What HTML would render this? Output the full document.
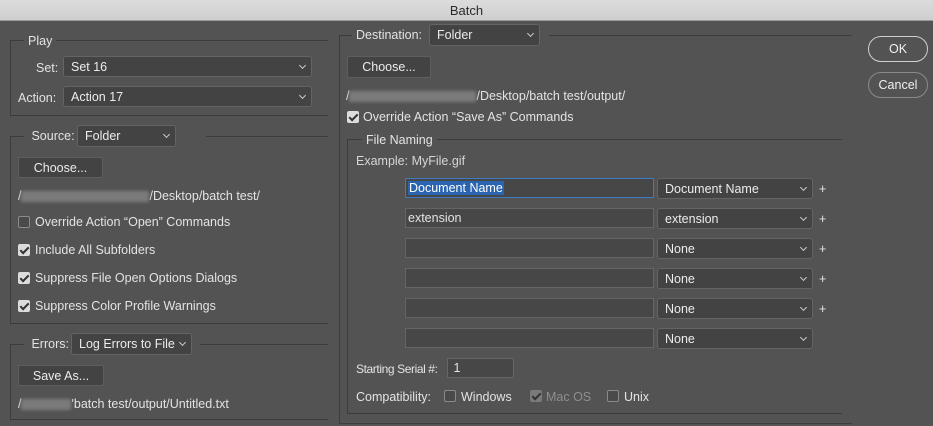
<!DOCTYPE html>
<html><head><style>
*{margin:0;padding:0;box-sizing:border-box}
body{width:933px;height:426px;background:#535353;font-family:"Liberation Sans",sans-serif;font-size:12.5px;color:#e3e3e3;position:relative;overflow:hidden}
.a{position:absolute;white-space:nowrap;margin-top:1px}
.title{left:0;top:0;width:933px;height:21px;background:linear-gradient(#dcdcdc,#cfcfcf);border-bottom:1px solid #9a9a9a;color:#2a2a2a;text-align:center;line-height:21px;font-size:13px;margin-top:0}
.hl{position:absolute;height:1px;background:#3c3c3c}
.vl{position:absolute;width:1px;background:#3c3c3c}
.dd{position:absolute;background:#434343;border:1px solid #646464;border-radius:3px;padding-left:7px;line-height:20px;color:#ececec}
.dd:after{content:"";position:absolute;right:6px;top:6px;width:4px;height:4px;border-right:1px solid #ccc;border-bottom:1px solid #ccc;transform:rotate(45deg)}
.btn{position:absolute;background:#434343;border:1px solid #5e5e5e;border-radius:2px;text-align:center;line-height:20px;color:#ececec}
.in{position:absolute;background:#474747;border:1px solid #656565;height:20px;padding-left:2px;line-height:19px}
.cb{position:absolute;width:12px;height:12px;border:1px solid #8a8a8a;border-radius:2px;background:#4a4a4a}
.cb.on{background:#dcdcdc;border-color:#dcdcdc}
.cb.on:after{content:"";position:absolute;left:3px;top:0px;width:3px;height:7px;border-right:2px solid #333;border-bottom:2px solid #333;transform:rotate(45deg)}
.blur{display:inline-block;height:11px;background:#7b7b7b;filter:blur(1.5px);vertical-align:middle}
.ok{position:absolute;border:1px solid #cfcfcf;border-radius:13px;text-align:center;color:#f0f0f0}
.lbl{background:#535353;padding:0 4px}
</style></head><body>
<div class="a title">Batch</div>

<div class="hl" style="left:10px;top:40px;width:318px"></div>
<div class="vl" style="left:10px;top:40px;height:76px"></div>
<div class="hl" style="left:10px;top:115px;width:318px"></div>
<div class="a lbl" style="left:24px;top:33px">Play</div>
<div class="a" style="left:36px;top:60px">Set:</div>
<div class="dd" style="left:63px;top:56px;width:249px;height:21px">Set 16</div>
<div class="a" style="left:18px;top:90px">Action:</div>
<div class="dd" style="left:63px;top:86px;width:249px;height:21px">Action 17</div>

<div class="hl" style="left:10px;top:136px;width:318px"></div>
<div class="vl" style="left:10px;top:136px;height:188px"></div>
<div class="hl" style="left:10px;top:323px;width:318px"></div>
<div class="a lbl" style="left:24px;top:128px;width:182px;height:16px">&nbsp;Source:</div>
<div class="dd" style="left:77px;top:125px;width:99px;height:22px;line-height:21px">Folder</div>
<div class="btn" style="left:18px;top:157px;width:85px;height:21px">Choose...</div>
<div class="a" style="left:18px;top:188px">/<span class="blur" style="width:128px"></span>/Desktop/batch test/</div>
<div class="cb" style="left:18px;top:216px"></div><div class="a" style="left:35px;top:214px">Override Action “Open” Commands</div>
<div class="cb on" style="left:18px;top:244px"></div><div class="a" style="left:35px;top:242px">Include All Subfolders</div>
<div class="cb on" style="left:18px;top:272px"></div><div class="a" style="left:35px;top:270px">Suppress File Open Options Dialogs</div>
<div class="cb on" style="left:18px;top:300px"></div><div class="a" style="left:35px;top:298px">Suppress Color Profile Warnings</div>

<div class="hl" style="left:10px;top:344px;width:318px"></div>
<div class="vl" style="left:10px;top:344px;height:76px"></div>
<div class="hl" style="left:10px;top:419px;width:318px"></div>
<div class="a lbl" style="left:24px;top:336px;width:176px;height:16px">&nbsp;Errors:</div>
<div class="dd" style="left:71px;top:333px;width:121px;height:22px;line-height:21px">Log Errors to File</div>
<div class="btn" style="left:18px;top:365px;width:86px;height:21px">Save As...</div>
<div class="a" style="left:18px;top:396px">/<span class="blur" style="width:50px"></span>'batch test/output/Untitled.txt</div>

<div class="hl" style="left:339px;top:35px;width:513px"></div>
<div class="vl" style="left:339px;top:35px;height:389px"></div>
<div class="hl" style="left:339px;top:423px;width:513px"></div>
<div class="a lbl" style="left:352px;top:27px;width:197px;height:16px">Destination:</div>
<div class="dd" style="left:429px;top:24px;width:111px;height:22px;line-height:21px">Folder</div>
<div class="btn" style="left:347px;top:56px;width:84px;height:22px;line-height:21px">Choose...</div>
<div class="a" style="left:346px;top:88px">/<span class="blur" style="width:127px"></span>/Desktop/batch test/output/</div>
<div class="cb on" style="left:347px;top:111px"></div><div class="a" style="left:363px;top:109px">Override Action “Save As” Commands</div>

<div class="hl" style="left:347px;top:139px;width:495px"></div>
<div class="vl" style="left:347px;top:139px;height:274px"></div>
<div class="hl" style="left:347px;top:413px;width:495px"></div>
<div class="a lbl" style="left:362px;top:132px">File Naming</div>
<div class="a" style="left:356px;top:153px;color:#d6d6d6">Example: MyFile.gif</div>

<div class="in" style="left:405px;top:178px;width:249px;border-color:#3d7cc4"><span style="background:#2a64b0;color:#fff;padding:0 1px">Document Name</span></div>
<div class="dd" style="left:657px;top:178px;width:156px;height:21px">Document Name</div>
<div class="a" style="left:819px;top:181px">+</div>
<div class="in" style="left:405px;top:208px;width:249px">extension</div>
<div class="dd" style="left:657px;top:208px;width:156px;height:21px">extension</div>
<div class="a" style="left:819px;top:211px">+</div>
<div class="in" style="left:405px;top:238px;width:249px"></div>
<div class="dd" style="left:657px;top:238px;width:156px;height:21px">None</div>
<div class="a" style="left:819px;top:241px">+</div>
<div class="in" style="left:405px;top:268px;width:249px"></div>
<div class="dd" style="left:657px;top:268px;width:156px;height:21px">None</div>
<div class="a" style="left:819px;top:271px">+</div>
<div class="in" style="left:405px;top:298px;width:249px"></div>
<div class="dd" style="left:657px;top:298px;width:156px;height:21px">None</div>
<div class="a" style="left:819px;top:301px">+</div>
<div class="in" style="left:405px;top:328px;width:249px"></div>
<div class="dd" style="left:657px;top:328px;width:156px;height:21px">None</div>

<div class="a" style="left:356px;top:361px;font-size:12px;letter-spacing:-0.4px">Starting Serial #:</div>
<div class="in" style="left:447px;top:358px;width:67px">&nbsp;1</div>
<div class="a" style="left:356px;top:389px">Compatibility:</div>
<div class="cb" style="left:444px;top:390px"></div><div class="a" style="left:461px;top:389px">Windows</div>
<div class="cb on" style="left:530px;top:390px;background:#7a7a7a;border-color:#7a7a7a"></div><div class="a" style="left:546px;top:389px;color:#8e8e8e">Mac OS</div>
<div class="cb" style="left:607px;top:390px"></div><div class="a" style="left:624px;top:389px">Unix</div>

<div class="ok" style="left:868px;top:36px;width:60px;height:26px;line-height:24px">OK</div>
<div class="ok" style="left:868px;top:72px;width:60px;height:26px;line-height:24px;border-color:#8a8a8a">Cancel</div>
</body></html>
